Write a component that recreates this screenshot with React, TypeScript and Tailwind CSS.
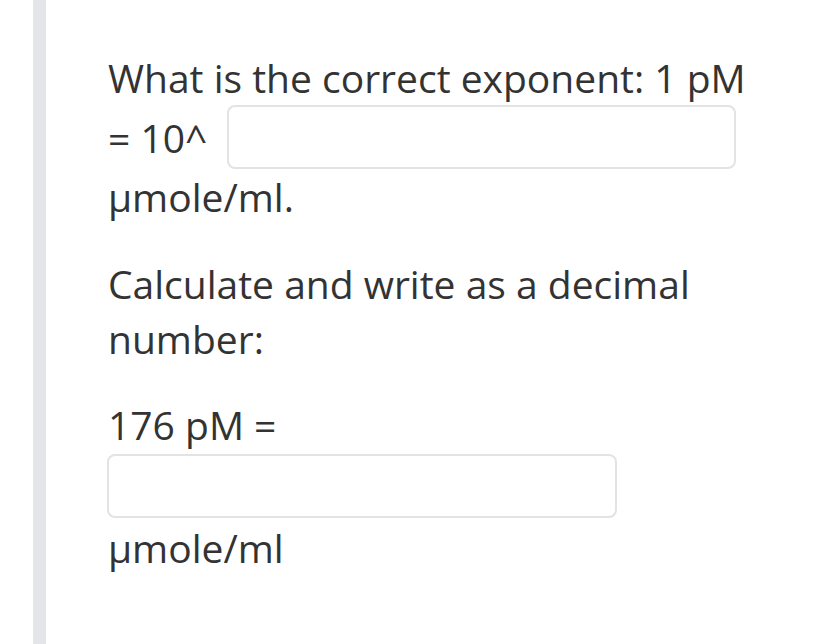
import React from 'react';

export default function App() {
  return (
    <div className="flex h-[644px] w-[820px] bg-white" style={{ fontFamily: '"Open Sans", sans-serif' }}>
      <div className="ml-[33px] w-[13px] bg-[#e4e5e8]" />
      <div className="pl-[62px] pt-[50px] w-[740px] text-[39px] leading-[55px] text-[#333333]">
        <p className="w-[660px]">
          What is the correct exponent: 1 pM = 10^{' '}
          <input
            type="text"
            className="ml-[10px] w-[509px] h-[64px] rounded-[8px] border-2 border-[#e3e3e3] bg-white"
          />{' '}
          µmole/ml.
        </p>
        <p className="mt-[32px] w-[660px]">Calculate and write as a decimal number:</p>
        <p className="mt-[31px]">176 pM =</p>
        <input
          type="text"
          className="block -ml-px mt-[2px] w-[510px] h-[64px] rounded-[8px] border-2 border-[#e3e3e3] bg-white"
        />
        <p className="mt-[2px]">µmole/ml</p>
      </div>
    </div>
  );
}
